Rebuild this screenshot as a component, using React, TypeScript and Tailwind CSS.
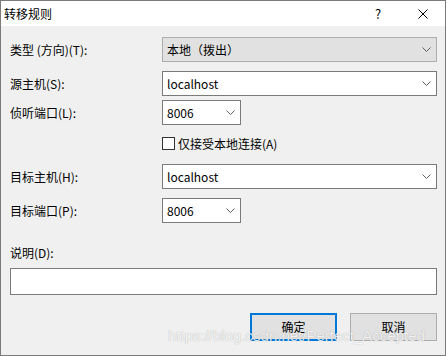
import React from "react";

const Chevron = () => (
  <svg width="9" height="5" viewBox="0 0 9 5" className="shrink-0">
    <polyline points="0.5,0.5 4.5,4.5 8.5,0.5" fill="none" stroke="#606060" strokeWidth="1" />
  </svg>
);

function Combo({ value, disabled, width }: { value: string; disabled?: boolean; width?: string }) {
  return (
    <div
      className={
        "h-[25px] flex items-center justify-between pl-[4px] pr-[5px] border " +
        (disabled ? "bg-[#e1e1e1] border-[#adadad] " : "bg-white border-[#7a7a7a] ") +
        (width ?? "w-full")
      }
    >
      <span className="leading-none">{value}</span>
      <Chevron />
    </div>
  );
}

export default function App() {
  return (
    <div
      className="relative w-[446px] h-[356px] border border-[#7a7a7a] bg-[#f0f0f0] flex flex-col text-[12px] text-black"
      style={{ fontFamily: '"Noto Sans CJK SC", "Noto Sans", sans-serif' }}
    >
      {/* Title bar */}
      <div className="h-[25px] bg-white flex items-center shrink-0">
        <span className="pl-[3px] flex-1 leading-none">转移规则</span>
        <div className="w-[44px] h-full flex items-center justify-center text-[13px]">?</div>
        <div className="w-[45px] h-full flex items-center justify-center">
          <svg width="10" height="10" viewBox="0 0 10 10">
            <path d="M0.5 0.5 L9.5 9.5 M9.5 0.5 L0.5 9.5" stroke="#000" strokeWidth="1" fill="none" />
          </svg>
        </div>
      </div>

      {/* Body */}
      <div className="flex flex-col pl-[9px] pr-[8px]">
        <div className="grid grid-cols-[152px_1fr] items-center mt-[11px]">
          <span>类型 (方向)(T):</span>
          <Combo value="本地（拨出）" disabled />
        </div>
        <div className="grid grid-cols-[152px_1fr] items-center mt-[9px]">
          <span>源主机(S):</span>
          <Combo value="localhost" />
        </div>
        <div className="grid grid-cols-[152px_1fr] items-center mt-[4px]">
          <span>侦听端口(L):</span>
          <Combo value="8006" width="w-[79px]" />
        </div>
        <div className="grid grid-cols-[152px_1fr] items-center mt-[12px]">
          <span />
          <div className="flex items-center gap-[3px]">
            <div className="w-[13px] h-[13px] border border-[#333] bg-white" />
            <span className="leading-none">仅接受本地连接(A)</span>
          </div>
        </div>
        <div className="grid grid-cols-[152px_1fr] items-center mt-[14px]">
          <span>目标主机(H):</span>
          <Combo value="localhost" />
        </div>
        <div className="grid grid-cols-[152px_1fr] items-center mt-[9px]">
          <span>目标端口(P):</span>
          <Combo value="8006" width="w-[79px]" />
        </div>
        <div className="mt-[24px] leading-none">说明(D):</div>
        <div className="mt-[9px] h-[27px] border border-[#7a7a7a] bg-white" />
        <div className="flex justify-end gap-[13px] mt-[18px]">
          <button className="w-[87px] h-[28px] border-2 border-[#0078d7] bg-[#e1e1e1] flex items-center justify-center">
            确定
          </button>
          <button className="w-[87px] h-[28px] border border-[#adadad] bg-[#e1e1e1] flex items-center justify-center">
            取消
          </button>
        </div>
      </div>

      {/* Watermark */}
      <div
        className="absolute left-[167px] top-[327px] text-[15px] leading-none text-white/85 [text-shadow:0_0_1px_rgba(0,0,0,0.35)] pointer-events-none whitespace-nowrap"
        style={{ fontFamily: '"Liberation Sans", Arial, sans-serif' }}
      >
        https://blog.csdn.net/Perfect_Accepted
      </div>
    </div>
  );
}
